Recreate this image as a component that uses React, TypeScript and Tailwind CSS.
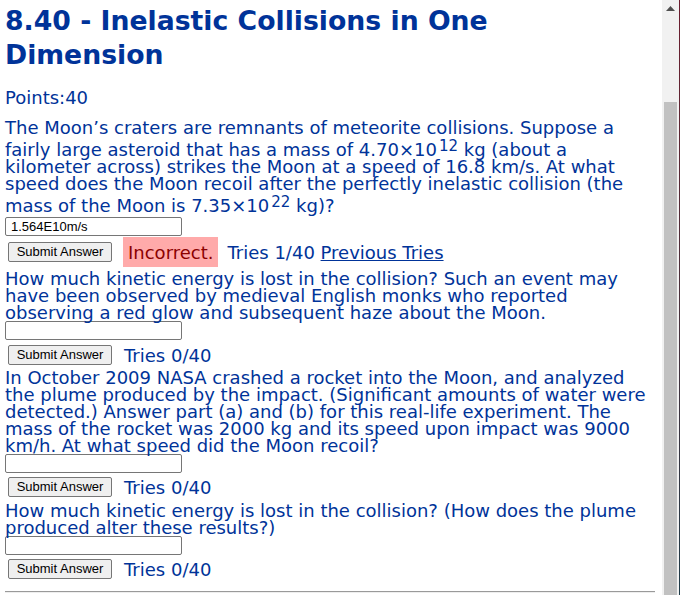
import React from "react";

const body = { fontFamily: '"DejaVu Sans", Verdana, sans-serif' };
const ctrl = { fontFamily: '"Liberation Sans", Arial, sans-serif' };

function Sup({ children }: { children: React.ReactNode }) {
  return <sup className="-top-[5px] ml-[2px] text-[15px]">{children}</sup>;
}

function Line({ children, raised }: { children: React.ReactNode; raised?: boolean }) {
  return <span className={raised ? "block whitespace-nowrap pt-[5px]" : "block whitespace-nowrap"}>{children}</span>;
}

function AnswerBox({ value = "" }: { value?: string }) {
  return (
    <div
      className="h-[19px] w-[177px] rounded-[2px] border border-[#767676] bg-white px-[5px] text-[13px] leading-[17px] text-black"
      style={ctrl}
    >
      {value}
    </div>
  );
}

function SubmitRow({ tries, incorrect }: { tries: string; incorrect?: boolean }) {
  return (
    <div className="flex items-center">
      <button
        className="ml-[3px] h-[20px] w-[104px] rounded-[2px] border border-[#767676] bg-[#efefef] text-[13px] leading-[18px] text-black"
        style={ctrl}
      >
        Submit Answer
      </button>
      {incorrect ? (
        <span className="ml-[11px] flex h-[30px] items-center bg-[#ffaaaa] px-[5px] text-[#8b0000]">Incorrect.</span>
      ) : null}
      <span className={incorrect ? "ml-[9px] whitespace-pre" : "ml-[12px] whitespace-pre"}>
        Tries {tries}
        {incorrect ? " " : ""}
        {incorrect ? <span className="underline">Previous Tries</span> : null}
      </span>
    </div>
  );
}

export default function App() {
  return (
    <div className="flex h-[595px] w-[680px] overflow-hidden bg-white text-[#003399]" style={body}>
      <div className="flex-1 overflow-hidden pl-[5px] pt-[4px] text-[18px] leading-[17px]">
        <h1 className="text-[26.7px] font-bold leading-[34px]">
          8.40 - Inelastic Collisions in One
          <br />
          Dimension
        </h1>
        <p className="mt-[17px]">Points:40</p>
        <p className="mt-[13px]">
          <Line>The Moon’s craters are remnants of meteorite collisions. Suppose a</Line>
          <Line raised>
            fairly large asteroid that has a mass of 4.70×10<Sup>12</Sup> kg (about a
          </Line>
          <Line>kilometer across) strikes the Moon at a speed of 16.8 km/s. At what</Line>
          <Line>speed does the Moon recoil after the perfectly inelastic collision (the</Line>
          <Line raised>
            mass of the Moon is 7.35×10<Sup>22</Sup> kg)?
          </Line>
        </p>
        <div className="mt-[3px]">
          <AnswerBox value="1.564E10m/s" />
        </div>
        <div className="mt-px">
          <SubmitRow tries="1/40" incorrect />
        </div>
        <p className="mt-[3px]">
          <Line>How much kinetic energy is lost in the collision? Such an event may</Line>
          <Line>have been observed by medieval English monks who reported</Line>
          <Line>observing a red glow and subsequent haze about the Moon.</Line>
        </p>
        <AnswerBox />
        <div className="mt-[5px]">
          <SubmitRow tries="0/40" />
        </div>
        <p className="mt-[4px]">
          <Line>In October 2009 NASA crashed a rocket into the Moon, and analyzed</Line>
          <Line>the plume produced by the impact. (Significant amounts of water were</Line>
          <Line>detected.) Answer part (a) and (b) for this real-life experiment. The</Line>
          <Line>mass of the rocket was 2000 kg and its speed upon impact was 9000</Line>
          <Line>km/h. At what speed did the Moon recoil?</Line>
        </p>
        <AnswerBox />
        <div className="mt-[4px]">
          <SubmitRow tries="0/40" />
        </div>
        <p className="mt-[5px]">
          <Line>How much kinetic energy is lost in the collision? (How does the plume</Line>
          <Line>produced alter these results?)</Line>
        </p>
        <AnswerBox />
        <div className="mt-[4px]">
          <SubmitRow tries="0/40" />
        </div>
        <div className="mr-[7px] mt-[12px] h-[2px] border-t border-[#9a9a9a] bg-[#eeeeee]" />
      </div>
      <div className="flex w-[17px] flex-col bg-[#f1f1f1]">
        <div className="flex h-[17px] items-center justify-center">
          <svg width="9" height="5" viewBox="0 0 9 5">
            <path d="M0 5 L4.5 0 L9 5 Z" fill="#505050" />
          </svg>
        </div>
        <div className="mx-[2px] mt-[85px] flex-1 bg-[#c1c1c1]" />
      </div>
      <div className="w-px bg-gradient-to-b from-[#6b1b2e] to-[#1d3a48]" />
    </div>
  );
}
